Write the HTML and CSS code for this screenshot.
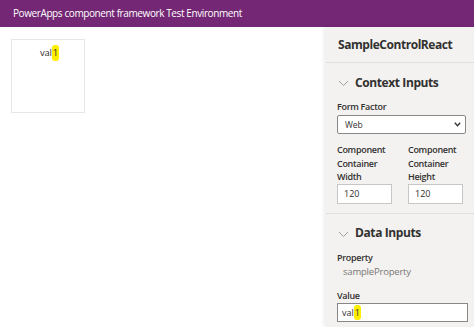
FILE: index.html
```html
<!DOCTYPE html>
<html>
<head>
  <meta charset="UTF-8">
  <title>PowerApps component framework Test Environment</title>
  <link rel="stylesheet" href="styles.css">
</head>
<body>
  <div class="topbar">PowerApps component framework Test Environment</div>
  <div class="main">
    <div class="stage">
      <div class="control-box">
        <span class="val">val<mark>1</mark></span>
      </div>
    </div>
    <div class="sidebar">
      <div class="side-title">SampleControlReact</div>

      <div class="section">
        <div class="section-head">
          <svg class="chev" width="11" height="7" viewBox="0 0 11 7"><path d="M1 1 L5.5 5.5 L10 1" fill="none" stroke="#a19f9d" stroke-width="1"/></svg>
          <span>Context Inputs</span>
        </div>
        <label class="field-label">Form Factor</label>
        <div class="select-wrap">
          <select class="select">
            <option>Web</option>
            <option>Tablet</option>
            <option>Phone</option>
          </select>
          <svg class="select-arrow" width="7" height="5" viewBox="0 0 7 5"><path d="M0.8 0.8 L3.5 3.8 L6.2 0.8" fill="none" stroke="#323130" stroke-width="1.3"/></svg>
        </div>
        <div class="two-col">
          <div class="col">
            <label class="field-label tall">Component Container Width</label>
            <input class="box small" type="text" value="120">
          </div>
          <div class="col">
            <label class="field-label tall">Component Container Height</label>
            <input class="box small" type="text" value="120">
          </div>
        </div>
      </div>

      <div class="section">
        <div class="section-head">
          <svg class="chev" width="11" height="7" viewBox="0 0 11 7"><path d="M1 1 L5.5 5.5 L10 1" fill="none" stroke="#a19f9d" stroke-width="1"/></svg>
          <span>Data Inputs</span>
        </div>
        <label class="field-label">Property</label>
        <div class="prop-name">sampleProperty</div>
        <label class="field-label">Value</label>
        <div class="box wide">val<mark>1</mark></div>
      </div>
    </div>
  </div>
</body>
</html>
```

FILE: styles.css
```css
body {
  margin: 0;
  font-family: "Open Sans", "Noto Sans", sans-serif;
  background-color: #ffffff;
  color: #323130;
  overflow: hidden;
}
.topbar {
  background-color: #742774;
  color: #ffffff;
  height: 27px;
  line-height: 26px;
  padding-left: 13px;
  font-size: 10px;
  letter-spacing: -0.4px;
}
.main {
  display: flex;
  height: 300px;
}
.stage {
  flex: 1;
  padding: 12px 0 0 11px;
}
.control-box {
  width: 74px;
  height: 74px;
  border: 1px solid #e6e6e6;
  text-align: center;
  font-family: "Open Sans", sans-serif;
  font-size: 9.5px;
  letter-spacing: -0.2px;
  padding: 6px 0 0 3px;
  box-sizing: border-box;
  color: #323130;
}
mark {
  background-color: #ffee00;
  color: inherit;
  border-radius: 3px;
  display: inline-block;
  padding: 3px 1px;
  margin: -3px 0;
  line-height: 1;
}
.sidebar {
  width: 148px;
  background-color: #f3f2f1;
  box-shadow: -2px 0 4px rgba(0, 0, 0, 0.08);
}
.side-title {
  font-size: 12px;
  font-weight: bold;
  letter-spacing: -0.45px;
  padding: 0 12px;
  height: 36px;
  line-height: 36px;
  border-bottom: 1px solid #e1dfdd;
  box-sizing: border-box;
}
.section {
  padding: 0 8px 9px 11px;
  border-bottom: 1px solid #e1dfdd;
}
.section-head {
  display: flex;
  align-items: center;
  height: 38px;
  font-size: 12px;
  font-weight: bold;
  letter-spacing: -0.4px;
}
.chev {
  margin: 3px 6px 0 1px;
}
.field-label {
  display: block;
  font-size: 9px;
  font-weight: 600;
  letter-spacing: -0.3px;
  line-height: 12px;
}
.field-label.tall {
  line-height: 13.5px;
}
.select-wrap {
  position: relative;
  width: 129px;
  margin: 2px 0 9px 0;
}
.select {
  appearance: none;
  width: 129px;
  height: 19px;
  font-size: 8.5px;
  font-family: "Open Sans", sans-serif;
  color: #323130;
  padding: 0 7px;
  border: 1px solid #8a8886;
  border-radius: 2px;
  background: #fff;
  display: block;
}
.select-arrow {
  position: absolute;
  right: 5px;
  top: 7px;
}
.two-col {
  display: flex;
  gap: 16px;
}
.col {
  width: 55px;
}
.box {
  box-sizing: border-box;
  border: 1px solid #c8c6c4;
  background: #fff;
  height: 20px;
  font-size: 9px;
  font-family: "Open Sans", sans-serif;
  color: #323130;
  padding: 0 6px;
  line-height: 18px;
  display: block;
}
.small {
  width: 55px;
}
.wide {
  width: 131px;
  height: 19px;
  border-color: #8a8886;
  margin-top: 1px;
  padding: 0 4px;
  line-height: 17px;
}
.prop-name {
  font-size: 9.5px;
  line-height: 12px;
  color: #797775;
  padding-left: 6px;
  letter-spacing: -0.2px;
  margin: 2px 0 12px 0;
}
```
